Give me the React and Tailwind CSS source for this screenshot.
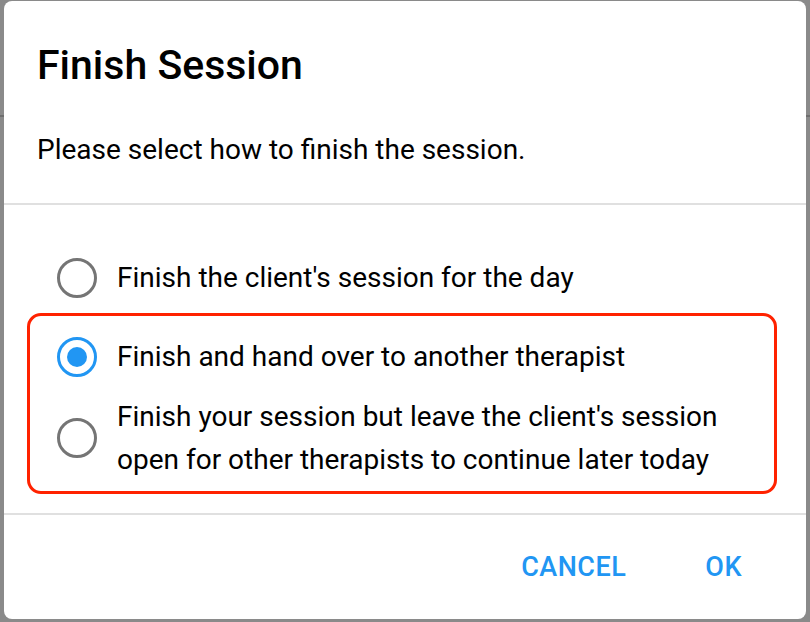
export default function App() {
  const font = { fontFamily: 'Roboto, "Noto Sans", sans-serif' };
  return (
    <div className="w-[810px] h-[622px] bg-[#8a8a8a] relative overflow-hidden" style={font}>
      <div className="absolute left-0 right-0 top-[115px] h-[2px] bg-[#6e6e6e]" />
      <div className="relative ml-[4px] mt-[1px] w-[802px] h-[618px] bg-white rounded-[8px] flex flex-col">
        <div className="h-[202px] pl-[33px] flex flex-col shrink-0">
          <div className="mt-[40px] text-[41px] leading-[48px] font-medium text-black">Finish Session</div>
          <div className="mt-[45px] text-[28px] leading-[32px] text-black">Please select how to finish the session.</div>
        </div>
        <div className="h-[2px] bg-[#e0e0e0] shrink-0" />
        <div className="h-[308px] flex flex-col pt-[51px] pl-[23px] pr-[29px] shrink-0">
          <div className="pl-[30px]">
            <Row label="Finish the client's session for the day" />
          </div>
          <div className="mt-[14px] border-[3px] border-[#ff2200] rounded-[14px] pt-[19px] pb-[10px] pl-[27px]">
            <Row label="Finish and hand over to another therapist" selected />
            <div className="mt-[17px]">
              <Row label={<>Finish your session but leave the client's session<br />open for other therapists to continue later today</>} />
            </div>
          </div>
        </div>
        <div className="h-[2px] bg-[#e0e0e0] shrink-0" />
        <div className="flex-1 flex items-center justify-end pr-[64px] gap-[79px] text-[27px] font-medium text-[#2196f3] tracking-[0.5px]">
          <span>CANCEL</span>
          <span>OK</span>
        </div>
      </div>
    </div>
  );
}

function Row({ label, selected }) {
  return (
    <div className="flex items-center gap-[20px]">
      {selected ? (
        <div className="w-[40px] h-[40px] rounded-full border-[3px] border-[#2196f3] flex items-center justify-center shrink-0">
          <div className="w-[20px] h-[20px] rounded-full bg-[#2196f3]" />
        </div>
      ) : (
        <div className="w-[40px] h-[40px] rounded-full border-[3px] border-[#757575] shrink-0" />
      )}
      <div className="text-[28px] leading-[43px] text-black">{label}</div>
    </div>
  );
}
